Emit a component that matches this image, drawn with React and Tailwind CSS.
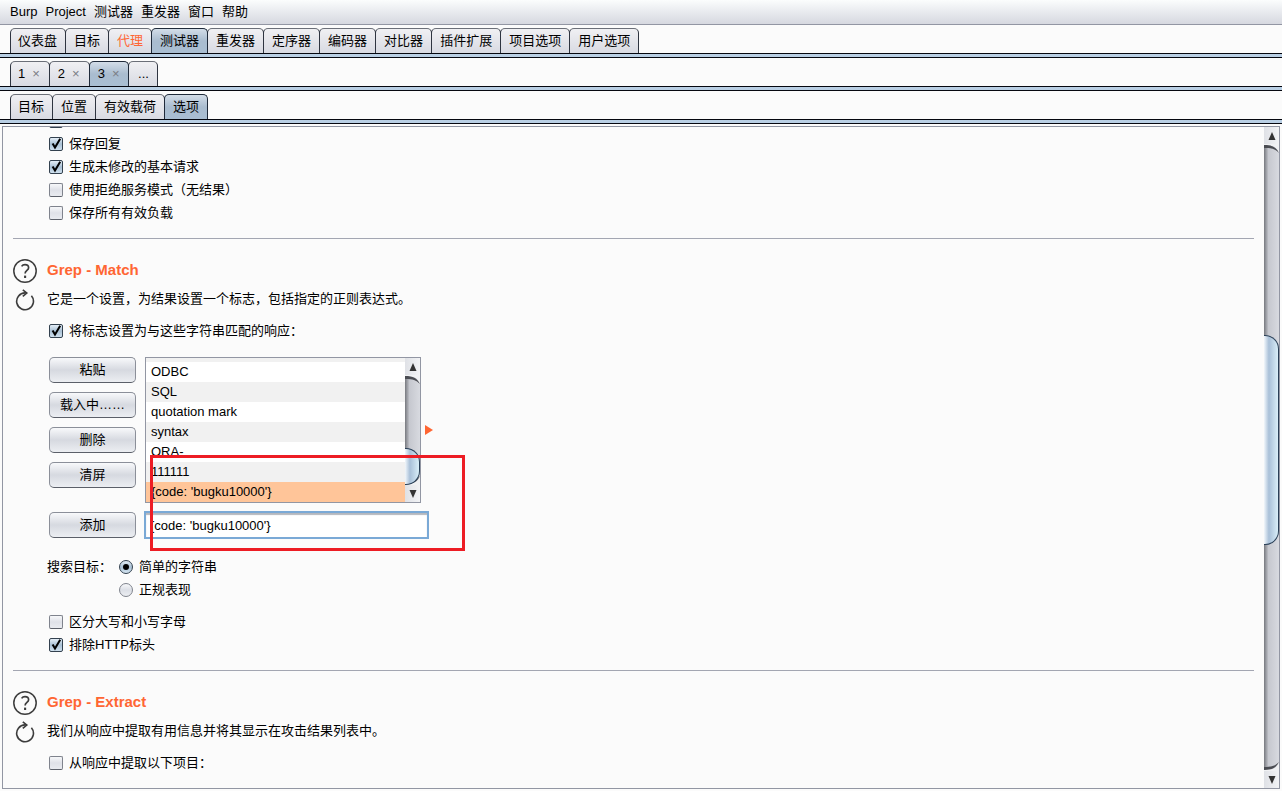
import { useState } from 'react';
import clsx from 'clsx';

const menuItems = ['Burp', 'Project', '测试器', '重发器', '窗口', '帮助'];

const mainTabs = [
  { label: '仪表盘' },
  { label: '目标' },
  { label: '代理', alert: true },
  { label: '测试器' },
  { label: '重发器' },
  { label: '定序器' },
  { label: '编码器' },
  { label: '对比器' },
  { label: '插件扩展' },
  { label: '项目选项' },
  { label: '用户选项' },
];

const attackTabs = [
  { label: '1', closable: true },
  { label: '2', closable: true },
  { label: '3', closable: true },
  { label: '...' },
];

const optionTabs = [{ label: '目标' }, { label: '位置' }, { label: '有效载荷' }, { label: '选项' }];

const grepStrings = ['ODBC', 'SQL', 'quotation mark', 'syntax', 'ORA-', '111111', "{code: 'bugku10000'}"];

function TabRow({ tabs, initial }) {
  const [active, setActive] = useState(initial);

  return (
    <div className="shrink-0 pt-[3px]">
      <div className="flex pl-2.5" role="tablist">
        {tabs.map((tab, i) => (
          <button
            key={i}
            role="tab"
            aria-selected={active === i}
            onClick={() => setActive(i)}
            className={clsx(
              'flex h-[25px] min-w-[30px] items-center justify-center rounded-t-[5px] border border-b-0 px-2 first:pl-[7px] not-first:-ml-px',
              active === i
                ? 'relative border-[#1f2a3a] bg-linear-to-b from-[#d3dde8] via-[#a9bccf] to-[#a9bed2]'
                : 'border-x-[#2e3440] border-t-[#6b6f78] bg-linear-to-b from-[#f0f0f3] to-[#d8dae2]',
              tab.alert && 'text-[#ff6633]'
            )}
          >
            {tab.label}
            {tab.closable && <span className="pr-px pl-[7px] text-[#7a7d84]">×</span>}
          </button>
        ))}
      </div>
      <div className="h-[5px] border-y border-[#05070f] bg-[#b9cfe4]" />
    </div>
  );
}

function Check({ label, ...props }) {
  return (
    <label className="flex h-[23px] items-center gap-1.5">
      <span className="grid size-3.5">
        <input
          type="checkbox"
          {...props}
          className="peer col-start-1 row-start-1 size-3.5 appearance-none rounded-[2px] border border-[#7f838d] border-b-[#5d616b] bg-linear-to-b from-[#f7f8fa] via-[#dfe1e8] to-[#e9ebf0] checked:border-[#33414f] checked:from-[#e4eef7] checked:via-[#a9c0d4] checked:to-[#cfe0ee]"
        />
        <svg
          viewBox="0 0 14 14"
          className="pointer-events-none invisible col-start-1 row-start-1 size-3.5 peer-checked:visible"
        >
          <path d="M3.6 6.4 6 10.6 11.2 1.8" fill="none" stroke="#000" strokeWidth="2" />
        </svg>
      </span>
      {label}
    </label>
  );
}

function Radio({ label, defaultChecked }) {
  return (
    <label className="flex h-[23px] items-center gap-1.5">
      <span className="grid size-3.5 place-items-center">
        <input
          type="radio"
          name="search-target"
          defaultChecked={defaultChecked}
          className="peer col-start-1 row-start-1 size-3.5 appearance-none rounded-full border border-[#7f838d] bg-linear-to-b from-[#f7f8fa] via-[#dcdfe6] to-[#eceef2] checked:border-[#33414f] checked:from-[#e4eef7] checked:via-[#a9c0d4] checked:to-[#d5e6f2]"
        />
        <span className="pointer-events-none invisible col-start-1 row-start-1 size-1.5 rounded-full bg-black peer-checked:visible" />
      </span>
      {label}
    </label>
  );
}

function PushButton({ children }) {
  return (
    <button className="h-[26px] w-[87px] rounded-[5px] border border-[#8b8f99] border-b-[#5b5f69] bg-linear-to-b from-[#f8f9fb] via-[#d6d9e0] to-[#eceef2]">
      {children}
    </button>
  );
}

function HelpIcon() {
  return (
    <svg viewBox="0 0 24 24" className="size-6" fill="none" stroke="#3c3c3c" strokeWidth="1.5">
      <circle cx="12" cy="12" r="11.2" />
      <path d="M8.6 7.4C9.4 6.2 10.6 5.700 12 5.700c2.100 0 3.600 1.100 3.600 3 0 2.700-3.500 2.900-3.500 5.900" strokeWidth="1.7" />
      <path d="M12.100 16.600v2.400" strokeWidth="2.100" />
    </svg>
  );
}

function ResetIcon() {
  return (
    <svg viewBox="0 0 20 22" className="h-[22px] w-5" fill="none" stroke="#3c3c3c" strokeWidth="1.6">
      <path d="M16.400 6.800A8.400 8.400 0 1 1 10 3.900h1.500" />
      <path d="M7.800.8l4 3.200-4 3.400" />
    </svg>
  );
}

function TrackCap({ className }) {
  return (
    <svg viewBox="0 0 15 9" className={clsx('absolute h-[9px] w-[15px]', className)}>
      <path d="M0 0H15V9C13 3 9 1 0 1z" fill="#f0f1f3" />
      <path d="M0 1C8 1 12 3 15 9 11 5 8 4 0 4z" fill="#4a4c52" />
    </svg>
  );
}

function ScrollBar({ thumb }) {
  return (
    <div className="flex w-[15px] shrink-0 flex-col">
      <button aria-label="up" className="grid h-[17px] place-items-center bg-linear-to-r from-[#dfe1e6] to-[#f2f3f5]">
        <svg viewBox="0 0 8 8" className="size-2">
          <path d="M4 0 7.5 8h-7z" fill="#333" />
        </svg>
      </button>
      <div className="relative flex-1 bg-linear-to-r from-[#77797f] via-[#c6c8cf] via-30% to-[#d8dae0]">
        <TrackCap className="top-0" />
        <TrackCap className="bottom-0 -scale-y-100" />
        <div
          className={clsx(
            'absolute w-[15px] rounded-r-[14px] border border-l-0 border-[#2a4058] bg-linear-to-r from-[#f2f7fb] via-[#a9c0d8] via-35% to-[#d9eef8]',
            thumb
          )}
        />
      </div>
      <button aria-label="down" className="grid h-[17px] place-items-center bg-linear-to-r from-[#dfe1e6] to-[#f2f3f5]">
        <svg viewBox="0 0 8 8" className="size-2">
          <path d="M4 8 .5 0h7z" fill="#333" />
        </svg>
      </button>
    </div>
  );
}

function Section({ title, description, children }) {
  return (
    <section className="flex gap-2.5 border-t border-[#a3a6b2] pt-5">
      <div className="flex w-6 flex-col items-center gap-1.5">
        <HelpIcon />
        <ResetIcon />
      </div>
      <div>
        <h2 className="text-[15px] leading-[22px] font-bold text-[#ff6633]">{title}</h2>
        <p className="mt-2 leading-5">{description}</p>
        {children}
      </div>
    </section>
  );
}

function GrepList() {
  const [selected, setSelected] = useState(6);

  return (
    <div className="flex h-[146px] w-[276px] border border-[#9296a3] bg-[#f1f1f1]">
      <ul className="flex-1 pt-1">
        {grepStrings.map((text, i) => (
          <li
            key={text}
            onClick={() => setSelected(i)}
            className={clsx(
              'h-5 pl-[5px] leading-5',
              selected === i ? 'bg-[#ffc599]' : i % 2 === 0 ? 'bg-white' : 'bg-[#f1f1f1]'
            )}
          >
            {text}
          </li>
        ))}
      </ul>
      <ScrollBar thumb="bottom-0 h-[37px]" />
    </div>
  );
}

export default function App() {
  return (
    <div className="flex h-screen flex-col overflow-hidden bg-[#fbfbfb] font-['Liberation_Sans','Noto_Sans_CJK_SC',sans-serif] text-[13px] leading-5 text-black">
      <nav className="flex h-[25px] shrink-0 items-center gap-2 border-b border-[#9296a3] bg-linear-to-b from-[#fbfdfd] to-[#d6d8e0] pl-2.5">
        {menuItems.map((item) => (
          <button key={item}>{item}</button>
        ))}
      </nav>

      <TabRow tabs={mainTabs} initial={3} />
      <TabRow tabs={attackTabs} initial={2} />
      <TabRow tabs={optionTabs} initial={3} />

      <main className="m-0.5 flex min-h-0 flex-1 border border-[#9296a3]">
        <div className="min-w-0 flex-1 overflow-hidden px-2.5">
          {/* options are scrolled, only the bottom edge of the first one shows */}
          <div className="-mt-[18px] pb-3.5 pl-9">
            <Check aria-label="option" defaultChecked />
            <Check label="保存回复" defaultChecked />
            <Check label="生成未修改的基本请求" defaultChecked />
            <Check label="使用拒绝服务模式（无结果）" />
            <Check label="保存所有有效负载" />
          </div>

          <Section title="Grep - Match" description="它是一个设置，为结果设置一个标志，包括指定的正则表达式。">
            <div className="mt-2.5 pl-0.5">
              <Check label="将标志设置为与这些字符串匹配的响应：" defaultChecked />
            </div>

            <div className="relative mt-[15px] pl-0.5">
              <div className="flex gap-[9px]">
                <div className="flex flex-col gap-[9px]">
                  <PushButton>粘贴</PushButton>
                  <PushButton>载入中……</PushButton>
                  <PushButton>删除</PushButton>
                  <PushButton>清屏</PushButton>
                </div>
                <div className="flex items-center gap-1">
                  <GrepList />
                  <svg viewBox="0 0 8 10" className="h-2.5 w-2">
                    <path d="M0 0 8 5 0 10z" fill="#ff6633" />
                  </svg>
                </div>
              </div>
              <div className="mt-2 flex items-center gap-2">
                <PushButton>添加</PushButton>
                <input
                  aria-label="添加"
                  defaultValue="{code: 'bugku10000'}"
                  className="h-7 w-[285px] border-2 border-[#7aa9d6] bg-white px-1 shadow-[inset_0_2px_1px_#b4b7be] outline-none"
                />
              </div>
              {/* highlight frame over the new entry */}
              <div className="pointer-events-none absolute top-[98px] left-[103px] h-24 w-[315px] border-3 border-[#ed1c24]" />
            </div>

            <div className="mt-4 flex gap-[7px]">
              <span className="leading-[23px]">搜索目标：</span>
              <div>
                <Radio label="简单的字符串" defaultChecked />
                <Radio label="正规表现" />
              </div>
            </div>

            <div className="mt-[9px] pb-3.5 pl-0.5">
              <Check label="区分大写和小写字母" />
              <Check label="排除HTTP标头" defaultChecked />
            </div>
          </Section>

          <Section title="Grep - Extract" description="我们从响应中提取有用信息并将其显示在攻击结果列表中。">
            <div className="mt-2.5 pl-0.5">
              <Check label="从响应中提取以下项目：" />
            </div>
          </Section>
        </div>
        <ScrollBar thumb="top-[30.5%] h-[210px]" />
      </main>
    </div>
  );
}
